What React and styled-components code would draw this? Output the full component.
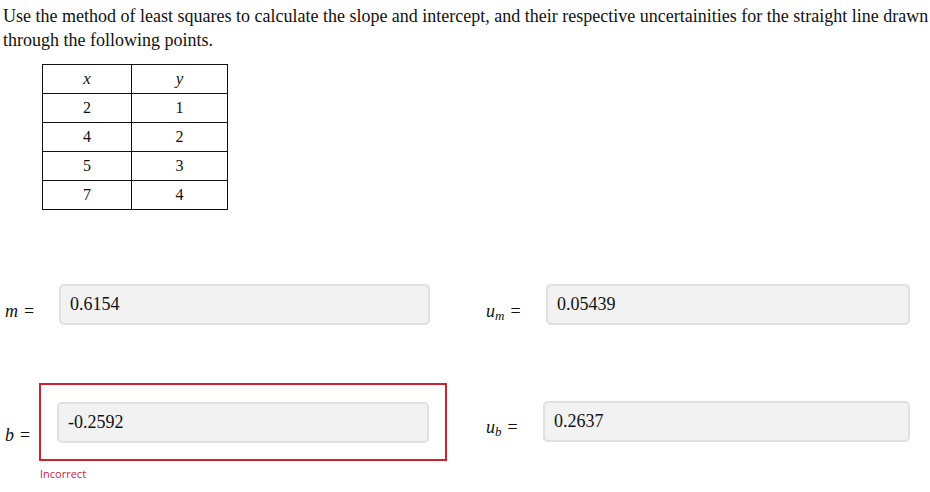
import React from 'react';
import styled, { createGlobalStyle } from 'styled-components';

const GlobalStyle = createGlobalStyle`
    body {
        margin: 0;
        background: #ffffff;
        font-family: "Liberation Serif", "Times New Roman", serif;
        color: #111111;
    }
`

const points = [
    { x: 2, y: 1 },
    { x: 4, y: 2 },
    { x: 5, y: 3 },
    { x: 7, y: 4 },
]

function Answer({ label, value, labelTop, labelWidth, width }) {
    return <Answer__row>
        <Answer__label style={{ paddingTop: labelTop, width: labelWidth }}>{label}<Equals>=</Equals></Answer__label>
        <Answer__input style={{ width }}>{value}</Answer__input>
    </Answer__row>
}

function App() {
    return <>
        <GlobalStyle />
        <Page>
            <Question>
                Use the method of least squares to calculate the slope and intercept, and their respective uncertainities for the straight line drawn through the following points.
            </Question>

            <Points>
                <thead>
                    <tr>
                        <Points__head>x</Points__head>
                        <Points__head>y</Points__head>
                    </tr>
                </thead>
                <tbody>
                    {points.map(p =>
                        <tr key={p.x}>
                            <Points__cell>{p.x}</Points__cell>
                            <Points__cell>{p.y}</Points__cell>
                        </tr>
                    )}
                </tbody>
            </Points>

            <Answers>
                <Answers__left>
                    <Answer label={<Math>m</Math>} value="0.6154" labelTop="17px" labelWidth="54px" width="371px" />
                </Answers__left>
                <Answers__right>
                    <Answer label={<Math>u<sub>m</sub></Math>} value="0.05439" labelTop="17px" labelWidth="60px" width="364px" />
                </Answers__right>

                <Answers__left $second>
                    <Answer__row>
                        <Answer__label style={{ paddingTop: '42px', width: '34px' }}><Math>b</Math><Equals>=</Equals></Answer__label>
                        <div>
                            <Incorrect__box>
                                <Answer__input style={{ width: '372px' }}>-0.2592</Answer__input>
                            </Incorrect__box>
                            <Incorrect__text>Incorrect</Incorrect__text>
                        </div>
                    </Answer__row>
                </Answers__left>
                <Answers__right $second>
                    <Answer label={<Math>u<sub>b</sub></Math>} value="0.2637" labelTop="16px" labelWidth="57px" width="367px" />
                </Answers__right>
            </Answers>
        </Page>
    </>
}

const Page = styled.div`
    padding: 4px 3px 0 3px;
`

const Question = styled.p`
    margin: 0;
    width: 927px;
    font-size: 18px;
    line-height: 24px;
`

const Points = styled.table`
    margin: 12px 0 0 39px;
    border-collapse: collapse;
    font-size: 16px;
`

const Points__head = styled.th`
    border: 1px solid #111111;
    height: 28px;
    font-style: italic;
    font-weight: normal;
    font-size: 17px;
    text-align: center;
    padding: 0;
    &:first-child { width: 88px; }
    &:last-child { width: 95px; }
`

const Points__cell = styled.td`
    border: 1px solid #111111;
    height: 28px;
    text-align: center;
    padding: 0;
`

const Answers = styled.div`
    display: grid;
    grid-template-columns: 483px 1fr;
    margin-top: 74px;
`

const Answers__left = styled.div`
    padding-left: 2px;
    margin-top: ${p => p.$second ? '58px' : '0'};
`

const Answers__right = styled.div`
    margin-top: ${p => p.$second ? '76px' : '0'};
`

const Answer__row = styled.div`
    display: flex;
    align-items: flex-start;
`

const Answer__label = styled.div`
    font-size: 18px;
    line-height: 20px;
    white-space: nowrap;
    flex-shrink: 0;
`

const Math = styled.i`
    font-family: "Liberation Serif", "Times New Roman", serif;
    sub {
        font-size: 13px;
        vertical-align: -3px;
        line-height: 0;
    }
`

const Equals = styled.span`
    margin-left: 6px;
`

const Answer__input = styled.div`
    box-sizing: border-box;
    height: 41px;
    padding: 8px 9px;
    background: #f2f2f2;
    border: 2px solid #e0e0e0;
    border-radius: 5px;
    font-size: 18px;
    line-height: 21px;
    color: #111111;
`

const Incorrect__box = styled.div`
    border: 2px solid #d0202e;
    padding: 17px 16px 16px 16px;
`

const Incorrect__text = styled.div`
    margin-top: 5px;
    padding-left: 1px;
    font-family: "Open Sans", "Liberation Sans", sans-serif;
    font-size: 11px;
    color: #d0203e;
`

export default App;
